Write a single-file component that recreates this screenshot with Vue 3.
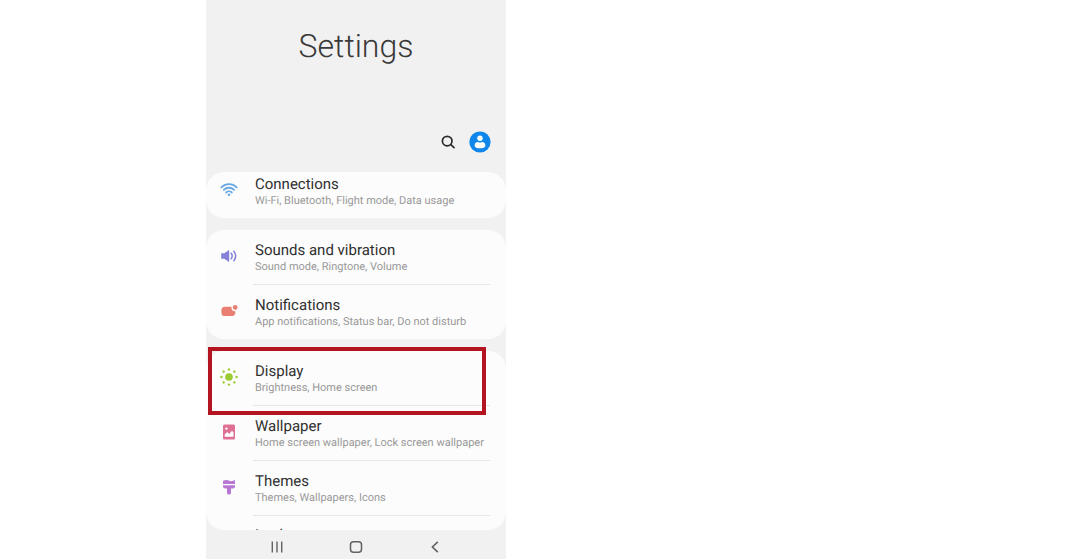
<script setup>
const groups = [
  { id: 'network', rows: [{ icon: 'wifi', title: 'Connections', sub: 'Wi-Fi, Bluetooth, Flight mode, Data usage' }] },
  {
    id: 'alerts',
    rows: [
      { icon: 'sound', title: 'Sounds and vibration', sub: 'Sound mode, Ringtone, Volume' },
      { icon: 'notif', title: 'Notifications', sub: 'App notifications, Status bar, Do not disturb' },
    ],
  },
  {
    id: 'look',
    rows: [
      { icon: 'display', title: 'Display', sub: 'Brightness, Home screen', marked: true },
      { icon: 'wallpaper', title: 'Wallpaper', sub: 'Home screen wallpaper, Lock screen wallpaper' },
      { icon: 'themes', title: 'Themes', sub: 'Themes, Wallpapers, Icons' },
      { icon: '', title: 'Lock', sub: '' },
    ],
  },
]
const rays = [0, 45, 90, 135, 180, 225, 270, 315]
</script>

<template>
  <main class="phone">
    <header class="header">
      <h1>Settings</h1>
      <div class="actions">
        <button type="button" aria-label="Search">
          <svg width="16" height="16" viewBox="0 0 16 16" fill="none" stroke="#2b2b2b" stroke-width="1.7" stroke-linecap="round">
            <circle cx="7.2" cy="7.1" r="4.8" /><path d="M10.8 10.7L14 13.7" />
          </svg>
        </button>
        <button type="button" aria-label="Account">
          <svg width="22" height="22" viewBox="0 0 22 22">
            <circle cx="11" cy="11" r="10.6" fill="#0f87ea" />
            <circle cx="11" cy="7.2" r="2.7" fill="#fff" />
            <path d="M5.6 14.4C5.6 12 7.4 10.9 8.8 10.9Q11 12.3 13.2 10.9C14.6 10.9 16.4 12 16.4 14.4C16.4 16.4 13.8 17.2 11 17.2S5.6 16.4 5.6 14.4Z" fill="#fff" />
          </svg>
        </button>
      </div>
    </header>

    <div class="list">
      <section v-for="g in groups" :key="g.id" class="card" :class="g.id">
        <a v-for="r in g.rows" :key="r.title" href="#" class="row">
          <span class="icon">
            <svg v-if="r.icon === 'wifi'" width="18" height="18" viewBox="0 0 18 18" fill="none" stroke="#69a9e4" stroke-width="1.8" stroke-linecap="round">
              <path d="M1.3 6.3C5.6 2 12.4 2 16.7 6.3" /><path d="M3.8 8.9C6.8 6 11.2 6 14.2 8.9" /><path d="M6.2 11.5C7.8 9.9 10.2 9.9 11.8 11.5" />
              <circle cx="9" cy="13.8" r="1.3" fill="#69a9e4" stroke="none" />
            </svg>
            <svg v-else-if="r.icon === 'sound'" width="18" height="18" viewBox="0 0 18 18">
              <path d="M1.2 6.2H4.3L8.6 3.2Q9.2 2.9 9.2 3.6V14.4Q9.2 15.1 8.6 14.8L4.3 11.8H1.2Z" fill="#8580d9" />
              <g fill="none" stroke="#8580d9" stroke-width="1.5" stroke-linecap="round"><path d="M11.2 6.2Q13.2 9 11.2 11.8" /><path d="M13.8 4.3Q17.6 9 13.8 13.7" /></g>
            </svg>
            <svg v-else-if="r.icon === 'notif'" width="18" height="18" viewBox="0 0 18 18">
              <path d="M5 4.7H11.6C11 7.3 12.6 9.3 15.4 9.2V10.2Q15.4 14 11.8 14H5Q1.4 14 1.4 10.4V8.3Q1.4 4.7 5 4.7Z" fill="#e97f72" />
              <circle cx="15.2" cy="5.4" r="2.4" fill="#e97f72" />
            </svg>
            <svg v-else-if="r.icon === 'display'" width="18" height="18" viewBox="0 0 18 18" fill="#9acb32">
              <circle cx="9" cy="9" r="3.8" />
              <circle v-for="a in rays" :key="a" cx="9" cy="1.4" r="1.2" :transform="`rotate(${a} 9 9)`" />
            </svg>
            <svg v-else-if="r.icon === 'wallpaper'" width="18" height="18" viewBox="0 0 18 18">
              <rect x="3" y="1.5" width="12" height="15" rx="1.5" fill="#df7093" />
              <circle cx="6.4" cy="5.6" r="1.2" fill="#fff" />
              <path d="M4.7 13.7V11.5L7.3 9.1L9.2 11L12 7.7L13.5 9.5V13.7Z" fill="#fff" />
            </svg>
            <svg v-else-if="r.icon === 'themes'" width="18" height="18" viewBox="0 0 18 18" fill="#b877d2">
              <path d="M3 2.8Q6.2 1.3 9 2.6T15 2V6H3Z" />
              <path d="M3 7.2H15V8.5Q15 10.6 12.8 10.6H11V15Q11 16.5 9 16.5T7 15V10.6H5.2Q3 10.6 3 8.5Z" />
            </svg>
          </span>
          <span class="text">
            <span class="title">{{ r.title }}</span>
            <span v-if="r.sub" class="sub">{{ r.sub }}</span>
          </span>
          <span v-if="r.marked" class="marker"></span>
        </a>
      </section>
    </div>

    <nav class="nav">
      <button type="button" aria-label="Recent apps">
        <svg width="14" height="14" viewBox="0 0 14 14" stroke="#626262" stroke-width="1.4"><path d="M2.3 1.5V12.5M7 1.5V12.5M11.7 1.5V12.5" /></svg>
      </button>
      <button type="button" aria-label="Home">
        <svg width="14" height="14" viewBox="0 0 14 14" fill="none" stroke="#626262" stroke-width="1.5"><rect x="1.5" y="1.7" width="11" height="10.6" rx="3" /></svg>
      </button>
      <button type="button" aria-label="Back">
        <svg width="14" height="14" viewBox="0 0 14 14" fill="none" stroke="#626262" stroke-width="1.6"><path d="M9.8 1.9L4.4 7L9.8 12.1" /></svg>
      </button>
    </nav>
  </main>
</template>

<style>
body {
  background: #fff;
}
</style>

<style scoped>
.phone {
  display: flex;
  flex-direction: column;
  box-sizing: border-box;
  width: 100%;
  max-width: 300px;
  height: 100vh;
  margin-left: 206px;
  background: #f1f1f1;
  font-family: Roboto, "Liberation Sans", sans-serif;
  text-rendering: geometricPrecision;
}
.header {
  display: flex;
  flex-direction: column;
  justify-content: space-between;
  flex: none;
  box-sizing: border-box;
  height: 172px;
  padding: 25px 15px 19px;
}
h1 {
  margin: 0;
  color: #3a3a3a;
  font-size: 32px;
  line-height: 42px;
  font-weight: 300;
  text-align: center;
}
.actions {
  display: flex;
  justify-content: flex-end;
  align-items: center;
  gap: 13px;
}
button {
  display: flex;
  padding: 0;
  border: 0;
  background: none;
}
.list {
  flex: 1;
  min-height: 0;
  display: flex;
  flex-direction: column;
  gap: 12px;
  overflow: hidden;
  border-radius: 18px;
}
.card {
  flex: none;
  border-radius: 18px;
  background: #fcfcfc;
}
.row {
  position: relative;
  display: flex;
  align-items: center;
  padding: 10px 16px 10px 14px;
  color: inherit;
  text-decoration: none;
}
.network .row {
  padding-top: 2px;
}
.icon {
  display: flex;
  width: 18px;
  margin-right: 17px;
  padding-bottom: 2px;
}
.text {
  display: flex;
  flex-direction: column;
}
.title {
  color: #303030;
  font-size: 15px;
  line-height: 20px;
}
.sub {
  color: #999;
  font-size: 11px;
  line-height: 14px;
}
.row:not(:last-child) {
  padding-bottom: 11px;
}
.look .row:last-child {
  padding-top: 9px;
}
.row:not(:last-child)::after {
  content: "";
  position: absolute;
  right: 16px;
  bottom: 0;
  left: 47px;
  height: 1px;
  background: #e6e6e6;
}
.marker {
  position: absolute;
  z-index: 1;
  inset: -4px 20px -9px 2px;
  border: 4px solid #b41420;
}
.nav {
  display: flex;
  flex: none;
  align-items: center;
  justify-content: space-between;
  height: 29px;
  box-sizing: border-box;
  padding: 5px 64px 0;
}
</style>
